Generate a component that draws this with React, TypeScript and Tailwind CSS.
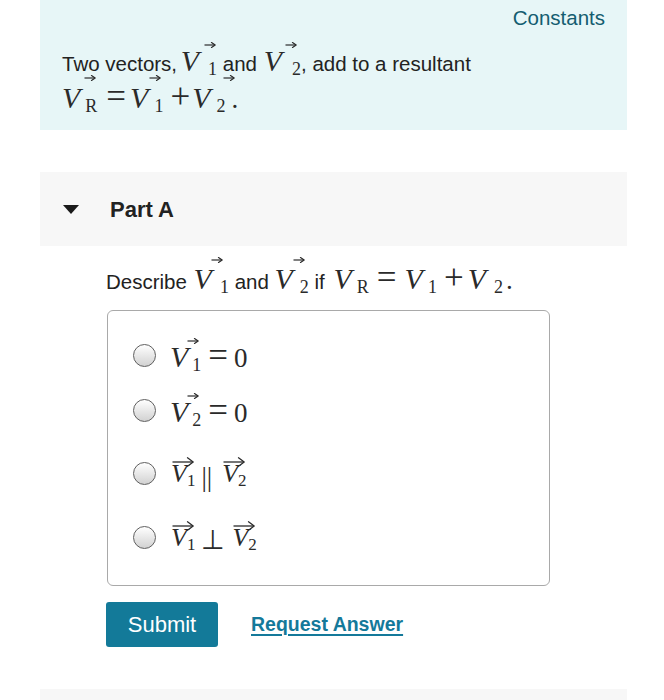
import React from 'react';

// ─── Math helpers ───────────────────────────────────────────────────────────

const Arrow: React.FC<{ className: string; big?: boolean }> = ({ className, big }) =>
  big ? (
    <svg width="22" height="10" viewBox="0 0 22 10" className={className} fill="none" stroke="currentColor">
      <path d="M0.5 5H21" strokeWidth="1.3" />
      <path d="M15.5 0.8L21.2 5L15.5 9.2" strokeWidth="1.3" strokeLinejoin="round" strokeLinecap="round" />
    </svg>
  ) : (
    <svg width="12" height="8" viewBox="0 0 12 8" className={className} fill="none" stroke="currentColor">
      <path d="M0.5 4H11" strokeWidth="1.2" />
      <path d="M7.5 1.6L11.2 4L7.5 6.4" strokeWidth="1.2" strokeLinejoin="round" strokeLinecap="round" />
    </svg>
  );

// V with a subscript; the arrow is an overlay placed by its class
const MV: React.FC<{ sub: string; subCls: string; arrowCls: string; big?: boolean; cls?: string }> = ({
  sub,
  subCls,
  arrowCls,
  big,
  cls = 'text-[30px]',
}) => (
  <span
    className={`relative inline-block whitespace-nowrap font-['Liberation_Serif','Times_New_Roman',serif] leading-none text-[#2a2a2a] ${cls}`}
  >
    <span className="italic">V</span>
    <span className={`relative not-italic ${subCls}`}>{sub}</span>
    <Arrow className={`absolute ${arrowCls}`} big={big} />
  </span>
);

const Op: React.FC<{ children: React.ReactNode; cls?: string }> = ({ children, cls = '' }) => (
  <span className={`font-['Liberation_Serif','Times_New_Roman',serif] text-[35px] leading-none text-[#2a2a2a] ${cls}`}>
    {children}
  </span>
);

const Num: React.FC<{ children: React.ReactNode; cls?: string }> = ({ children, cls = '' }) => (
  <span className={`font-['Liberation_Serif',serif] text-[27px] leading-none text-[#2a2a2a] ${cls}`}>{children}</span>
);

// ─── Pieces ─────────────────────────────────────────────────────────────────

const Radio: React.FC = () => (
  <span className="block h-[23px] w-[23px] shrink-0 rounded-full border-[1.5px] border-[#5f5f5f] bg-gradient-to-b from-white to-[#d2d2d2]" />
);

const Option: React.FC<{ h: string; children: React.ReactNode }> = ({ h, children }) => (
  <div className={`flex items-center ${h}`}>
    <Radio />
    <div className="ml-[14px] whitespace-nowrap leading-none">{children}</div>
  </div>
);

// ─── Page ───────────────────────────────────────────────────────────────────

export default function App() {
  return (
    <div className="min-h-[700px] w-[664px] bg-white font-['Liberation_Sans',Arial,sans-serif] text-[#222]">
      {/* intro */}
      <div className="ml-[40px] h-[130px] w-[587px] bg-[#e7f6f7] px-[22px] pt-[5px]">
        <div className="text-right text-[20.5px] leading-[26px] text-[#145d70]">Constants</div>
        <p className="mt-[15px] text-[20.5px] leading-[31px]">
          Two vectors,{' '}
          <MV sub="1" subCls="ml-[9px] top-[4px] text-[18px]" arrowCls="left-[23px] top-[-5px]" cls="-ml-[2px] text-[30px]" />{' '}
          and <MV sub="2" subCls="ml-[10px] top-[4px] text-[18px]" arrowCls="left-[21px] top-[-5px]" cls="ml-[1px] text-[30px]" />
          , add to a resultant
          <br />
          <MV sub="R" subCls="ml-[5px] top-[4px] text-[18px]" arrowCls="left-[22px] top-[-9px]" />
          <Op cls="ml-[9px] mr-[4px]">=</Op>
          <MV sub="1" subCls="ml-[6px] top-[4px] text-[18px]" arrowCls="left-[19px] top-[-9px]" />
          <Op cls="ml-[7px]">+</Op>
          <MV sub="2" subCls="ml-[6px] top-[4px] text-[18px]" arrowCls="left-[31px] top-[-9px]" cls="ml-[2px] text-[30px]" />
          <Num cls="ml-[6px]">.</Num>
        </p>
      </div>

      {/* part header */}
      <div className="ml-[40px] mt-[42px] flex h-[74px] w-[587px] items-center bg-[#f7f7f7]">
        <svg width="16" height="9" viewBox="0 0 16 9" className="ml-[23px]">
          <path d="M0 0H16L8 9Z" fill="#1a1a1a" />
        </svg>
        <span className="ml-[31px] text-[22px] font-bold text-[#222]">Part A</span>
      </div>

      {/* question */}
      <div className="ml-[106px] w-[520px]">
        <p className="mt-[14px] text-[20.5px] leading-[32px]">
          Describe <MV sub="1" subCls="ml-[8px] top-[4px] text-[18px]" arrowCls="left-[17px] top-[-8px]" cls="ml-[1px] text-[30px]" />{' '}
          and <MV sub="2" subCls="ml-[7px] top-[4px] text-[18px]" arrowCls="left-[18px] top-[-8px]" /> if{' '}
          <MV sub="R" subCls="ml-[5px] top-[4px] text-[18px]" arrowCls="hidden" cls="ml-[3px] text-[30px]" />
          <Op cls="ml-[8px] mr-[8px]">=</Op>
          <MV sub="1" subCls="ml-[5px] top-[4px] text-[18px]" arrowCls="hidden" />
          <Op cls="ml-[7px] mr-[4px]">+</Op>
          <MV sub="2" subCls="ml-[8px] top-[4px] text-[18px]" arrowCls="hidden" />
          <Num cls="ml-[3px]">.</Num>
        </p>

        {/* choices */}
        <div className="ml-[1px] mt-[12px] h-[276px] w-[443px] rounded-[6px] border-[1.5px] border-[#a9a9a9] pl-[25px] pt-[19px]">
          <Option h="h-[50px]">
            <MV sub="1" subCls="ml-[4px] top-[4px] text-[18px]" arrowCls="left-[17px] top-[-5px]" />
            <Op cls="ml-[7px]">=</Op>
            <Num cls="ml-[6px]">0</Num>
          </Option>
          <Option h="h-[60px]">
            <MV sub="2" subCls="ml-[4px] top-[4px] text-[18px]" arrowCls="left-[17px] top-[-5px]" />
            <Op cls="ml-[7px]">=</Op>
            <Num cls="ml-[6px]">0</Num>
          </Option>
          <Option h="h-[66px]">
            <MV sub="1" subCls="top-[4px] text-[17px]" arrowCls="left-[1px] top-[-4px]" big cls="ml-[1px] text-[26px]" />
            <Num cls="relative top-[4px] ml-[6px] mr-[10px] text-[24px]">||</Num>
            <MV sub="2" subCls="top-[4px] text-[17px]" arrowCls="left-[1px] top-[-4px]" big cls="text-[26px]" />
          </Option>
          <Option h="h-[62px]">
            <MV sub="1" subCls="top-[4px] text-[17px]" arrowCls="left-[1px] top-[-4px]" big cls="ml-[1px] text-[26px]" />
            <Num cls="relative top-[3px] ml-[6px] mr-[7px] text-[22px]">⊥</Num>
            <MV sub="2" subCls="top-[4px] text-[17px]" arrowCls="left-[1px] top-[-4px]" big cls="text-[26px]" />
          </Option>
        </div>

        {/* actions */}
        <div className="mt-[16px] flex items-center">
          <button className="h-[45px] w-[112px] rounded-[3px] bg-[#137a99] text-[22px] text-white">Submit</button>
          <a className="ml-[33px] text-[19.5px] font-bold text-[#14799a] underline decoration-[1.5px] underline-offset-[3px]">
            Request Answer
          </a>
        </div>
      </div>

      <div className="ml-[40px] mt-[42px] h-[20px] w-[587px] bg-[#f7f7f7]" />
    </div>
  );
}
